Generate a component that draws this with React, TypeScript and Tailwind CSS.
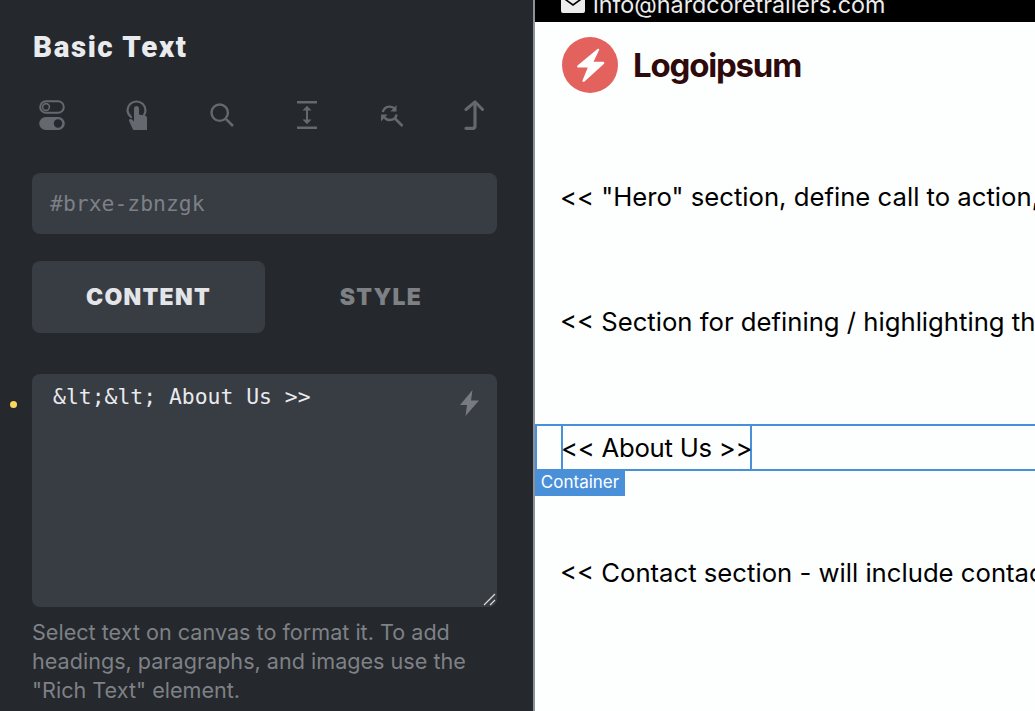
const mono = "font-['DejaVu_Sans_Mono',monospace]";
const sans = "font-['Inter',sans-serif]";

function IconToggles() {
  return (
    <svg width="26" height="30" viewBox="0 0 26 30" fill="none">
      <rect x="1.2" y="1.2" width="23.6" height="11.6" rx="5.8" stroke="#65686e" strokeWidth="2" />
      <circle cx="7" cy="7" r="3.4" stroke="#65686e" strokeWidth="1.6" />
      <rect x="0.2" y="17" width="25.6" height="13" rx="6.5" fill="#65686e" />
      <circle cx="19" cy="23.5" r="4.2" fill="#25282d" />
    </svg>
  );
}
function IconHand() {
  return (
    <svg width="22" height="30" viewBox="0 0 22 30" fill="none">
      <path d="M5 17C2.8 15 1.5 12.8 1.5 10.2C1.5 5.2 5.6 1.5 10.5 1.5C15.4 1.5 19.5 5.2 19.5 10.2C19.5 12 19 13.5 18 15" stroke="#65686e" strokeWidth="2.2" strokeLinecap="round" />
      <path d="M8 8.5C8 7.1 9 6 10.5 6C12 6 13 7.1 13 8.5V14.5L18.7 15.6C20.2 15.9 21 16.8 21 18.2V30H7.2L3.2 21.3C2.6 20 3.2 19 4.4 19C5.4 19 6.2 19.4 8 21.5Z" fill="#65686e" />
    </svg>
  );
}
function IconSearch() {
  return (
    <svg width="24" height="24" viewBox="0 0 24 24" fill="none">
      <circle cx="9.7" cy="9.7" r="8.2" stroke="#65686e" strokeWidth="2.4" />
      <path d="M15.8 15.8L23 23" stroke="#65686e" strokeWidth="2.6" />
    </svg>
  );
}
function IconHeight() {
  return (
    <svg width="20" height="28" viewBox="0 0 20 28" fill="none">
      <path d="M0 1.2H20M0 26.8H20" stroke="#65686e" strokeWidth="2.4" />
      <path d="M10 6V22" stroke="#65686e" strokeWidth="2" />
      <path d="M5.5 9.5L10 4.8L14.5 9.5ZM5.5 18.5L10 23.2L14.5 18.5Z" fill="#65686e" />
    </svg>
  );
}
function IconRefreshSearch() {
  return (
    <svg width="23" height="23" viewBox="0 0 23 23" fill="none">
      <path d="M1.8 8C2.8 4.5 5.5 2.6 8.7 2.6C10.8 2.6 12.6 3.4 14 5" stroke="#65686e" strokeWidth="2.4" />
      <path d="M15.5 1V7.5H9.5Z" fill="#65686e" />
      <path d="M15.6 10.5C14.8 14 12 16 8.7 16C6.6 16 4.8 15.2 3.4 13.6" stroke="#65686e" strokeWidth="2.4" />
      <path d="M0 17.5V10.5H6.5Z" fill="#65686e" />
      <path d="M14 14.5L21.5 22" stroke="#65686e" strokeWidth="2.6" />
    </svg>
  );
}
function IconArrow() {
  return (
    <svg width="20" height="30" viewBox="0 0 20 30" fill="none">
      <path d="M2 9.5L11 1.8L18.5 9.5" stroke="#65686e" strokeWidth="3" strokeLinecap="round" strokeLinejoin="round" />
      <path d="M11 3V26C11 27.4 10.2 28.3 8.7 28.3H2" stroke="#65686e" strokeWidth="3.2" strokeLinecap="round" />
    </svg>
  );
}
function Mail() {
  return (
    <svg width="24" height="16" viewBox="0 0 24 16" fill="none">
      <rect width="24" height="16" rx="2" fill="#ececec" />
      <path d="M1 0L12 8L23 0" stroke="#000" strokeWidth="1.6" />
    </svg>
  );
}
function Logo() {
  return (
    <svg width="56" height="56" viewBox="0 0 56 56">
      <circle cx="28" cy="28" r="28" fill="#e4625e" />
      <path d="M35.5 12C36.8 11.2 37.6 12 37 13.2L31.5 24.8H41C42.4 24.8 42.8 26 41.8 27L22.5 44.4C21.2 45.4 20 44.6 20.6 43.2L25.8 30.6H16.5C15 30.6 14.6 29.2 15.8 28.2Z" fill="#fff" />
    </svg>
  );
}

export default function App() {
  const iconBox = "flex w-[26px] justify-center";
  return (
    <div className="flex h-[711px] w-[1035px] overflow-hidden bg-white">
      <aside className={`relative flex h-full w-[533px] shrink-0 flex-col bg-[#25282c] pl-[32px] pr-[36px] pt-[29px] ${sans}`}>
        <h1 className="ml-[1px] text-[29.5px] font-black leading-[36px] tracking-[1.6px] text-[#e9ebee] [font-family:Roboto,sans-serif]">Basic Text</h1>
        <div className="mt-[34px] flex h-[32px] items-center gap-[59px] pl-[7px]">
          <div className={iconBox}><IconToggles /></div>
          <div className={iconBox}><IconHand /></div>
          <div className={iconBox}><IconSearch /></div>
          <div className={iconBox}><IconHeight /></div>
          <div className={iconBox}><IconRefreshSearch /></div>
          <div className={`${iconBox} -ml-[3px]`}><IconArrow /></div>
        </div>
        <div className={`mt-[42px] flex h-[61px] items-center rounded-[8px] bg-[#383c43] pl-[18px] pt-[1px] text-[21.4px] text-[#7d8086] ${mono}`}>#brxe-zbnzgk</div>
        <div className="mt-[27px] flex h-[72px]">
          <div className="flex w-[233px] items-center justify-center rounded-[8px] bg-[#383c43] text-[23px] font-black tracking-[1.3px] text-[#e3e5e8]">CONTENT</div>
          <div className="flex flex-1 items-center justify-center text-[23px] font-black tracking-[1.3px] text-[#7d8084]">STYLE</div>
        </div>
        <div className="relative mt-[41px] h-[233px] rounded-[8px] bg-[#383c43] pl-[21px] pt-[9px]">
          <span className="absolute left-[-22px] top-[27px] h-[7px] w-[7px] rounded-full bg-[#fbd75b]" />
          <div className={`text-[21.4px] leading-[28px] text-[#e8eaed] ${mono}`}>&amp;lt;&amp;lt; About Us &gt;&gt;</div>
          <svg className="absolute right-[17px] top-[16px]" width="20" height="26" viewBox="0 0 20 26"><path d="M12.5 0L0 15H7L5.5 26L19 10.5H11Z" fill="#777a7f" /></svg>
          <svg className="absolute bottom-[1px] right-[1px]" width="13" height="13" viewBox="0 0 13 13"><path d="M1 12L12 1M7 12L12 7" stroke="#d8d8d8" strokeWidth="1.3" /></svg>
        </div>
        <p className="mt-[11px] text-[21.6px] leading-[29px] text-[#7e8186]">Select text on canvas to format it. To add headings, paragraphs, and images use the "Rich Text" element.</p>
      </aside>
      <main className={`min-w-0 flex-1 overflow-hidden whitespace-nowrap border-l-2 border-[#8d9199] bg-[#fdfefe] text-[25.7px] text-black ${sans}`}>
        <div className="flex h-[22px] items-end gap-[8px] overflow-hidden bg-black pb-[9px] pl-[26px] text-[#ececec]">
          <Mail />
          <span className="text-[23.3px] leading-[16px]">info@hardcoretrailers.com</span>
        </div>
        <div className="mt-[15px] flex h-[56px] items-center gap-[15px] pl-[27px]">
          <Logo />
          <span className="mt-[2px] text-[33px] font-bold tracking-[-1.2px] text-[#2e0a0c]">Logoipsum</span>
        </div>
        <div className="mt-[86px] h-[36px] pl-[25px] leading-[36px]">&lt;&lt; "Hero" section, define call to action, and more &gt;&gt;</div>
        <div className="mt-[89px] h-[36px] pl-[25px] leading-[36px]">&lt;&lt; Section for defining / highlighting the problem &gt;&gt;</div>
        <div className="relative mt-[84px] h-[47px] border-y-2 border-[#4a90d9] pl-[26px]">
          <div className="absolute inset-y-[-2px] left-0 w-[2px] bg-[#4a90d9]" />
          <div className="-mt-[2px] inline-block h-[47px] border-2 border-[#4a90d9] leading-[43px] tracking-[-0.25px]"><span className="-mx-[2px] inline-block">&lt;&lt; About Us &gt;&gt;</span></div>
          <div className="absolute left-0 top-[43px] flex h-[27px] w-[90px] items-center justify-center bg-[#4a90d9] text-[17px] text-white">Container</div>
        </div>
        <div className="mt-[84px] h-[36px] pl-[25px] leading-[36px]">&lt;&lt; Contact section - will include contact details &gt;&gt;</div>
      </main>
    </div>
  );
}
